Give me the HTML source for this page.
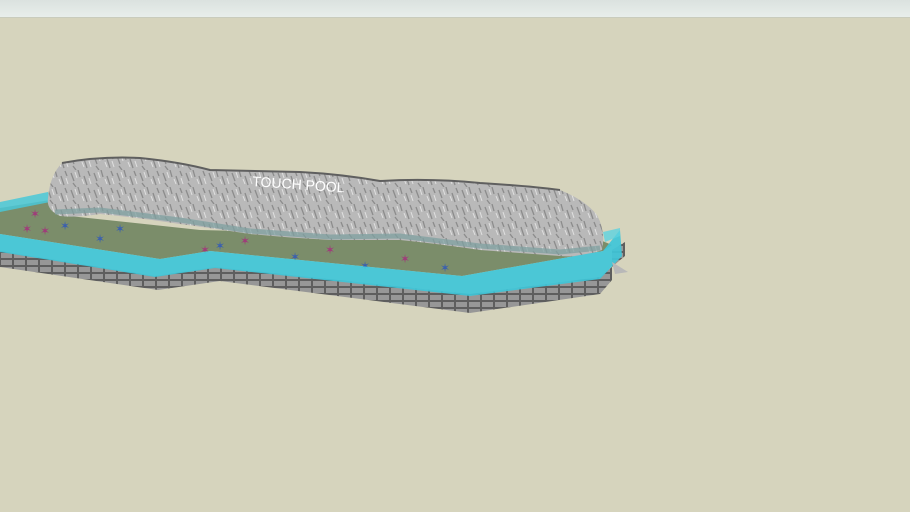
<!DOCTYPE html>
<html><head><style>
html,body{margin:0;padding:0;width:910px;height:512px;overflow:hidden;background:#d6d4bd}
.top{position:absolute;left:0;top:0;width:910px;height:17px;background:linear-gradient(#dbe2df,#e8eeeb);border-bottom:1px solid #c9ccbd}
svg{position:absolute;left:0;top:0}
</style></head><body>
<div class="top"></div>
<svg width="910" height="512" viewBox="0 0 910 512">
<defs>
<pattern id="brick" width="13" height="7" patternUnits="userSpaceOnUse">
<rect width="13" height="7" fill="#5e5e5e"/>
<rect x="1" y="1" width="11" height="5" fill="#979797"/>
</pattern>
<pattern id="rock" width="23" height="17" patternUnits="userSpaceOnUse">
<rect width="23" height="17" fill="#b9b9b9"/>
<path d="M2 3 L5 11 M9 0 L11 7 M15 6 L18 15 M4 13 L7 17 M19 1 L21 6" stroke="#8c8c8c" stroke-width="1.3"/>
<path d="M6 2 L8 8 M13 9 L15 14 M20 8 L22 14" stroke="#e0e0e0" stroke-width="1"/>
</pattern>
</defs>
<!-- wall -->
<polygon points="0,251 155,276 215,267 470,294 600,277 625,256 625,242 612,250 612,280 600,294 470,313 220,281 158,290 0,267" fill="url(#brick)"/>
<!-- floor -->
<polygon points="0,208 50,200 60,215 200,230 600,240 612,245 603,251 462,276 210,251 160,259 0,234" fill="#7b8d6a"/>
<!-- left rim back -->
<polygon points="0,202 48,192 50,202 0,212" fill="#49c8d8" opacity=".85"/>
<!-- rock -->
<path d="M62,163 Q100,156 140,158 Q180,162 210,170 L300,172 Q340,174 380,181 Q430,178 480,183 Q530,186 560,190 Q585,200 597,215 Q606,232 602,250 Q580,258 560,256 L480,250 Q440,244 400,240 L330,240 Q290,238 250,234 Q210,228 180,224 Q140,218 100,214 Q75,218 60,216 Q46,210 48,198 Q50,175 62,163 Z" fill="url(#rock)"/>
<path d="M62,163 Q100,156 140,158 Q180,162 210,170 L300,172 Q340,174 380,181 Q430,178 480,183 Q530,186 560,190" fill="none" stroke="#5f5f5f" stroke-width="2"/>
<polyline points="55,212 100,210 180,220 250,231 330,237 400,236 480,246 560,252 600,248" fill="none" stroke="#7fa0a0" stroke-width="5" opacity=".75"/>
<!-- stars -->
<g font-size="12" font-family="DejaVu Sans,sans-serif">
<text x="22" y="233" fill="#a03a7a">✶</text><text x="30" y="218" fill="#a03a7a">✶</text><text x="40" y="235" fill="#a03a7a">✶</text><text x="60" y="230" fill="#3a5fb0">✶</text>
<text x="95" y="243" fill="#3a5fb0">✶</text><text x="115" y="233" fill="#3a5fb0">✶</text><text x="240" y="245" fill="#a03a7a">✶</text>
<text x="200" y="254" fill="#a03a7a">✶</text><text x="325" y="254" fill="#a03a7a">✶</text><text x="400" y="263" fill="#a03a7a">✶</text>
<text x="290" y="261" fill="#3a5fb0">✶</text><text x="215" y="250" fill="#3a5fb0">✶</text><text x="360" y="270" fill="#3a5fb0">✶</text><text x="440" y="272" fill="#3a5fb0">✶</text>
</g>
<!-- front rim -->
<polygon points="0,234 160,259 210,251 462,276 603,251 620,230 622,256 600,279 470,296 215,268 155,277 0,252" fill="#3fc6d8" opacity=".92"/>
<polygon points="603,232 620,228 620,236 605,242" fill="#5dd2e0" opacity=".8"/>
<text x="252" y="186" fill="#fff" font-family="Liberation Sans,sans-serif" font-size="14" transform="rotate(4 252 186)">TOUCH POOL</text>
<polygon points="612,262 628,272 615,274" fill="#b8b8b8"/>
</svg>
</body></html>
